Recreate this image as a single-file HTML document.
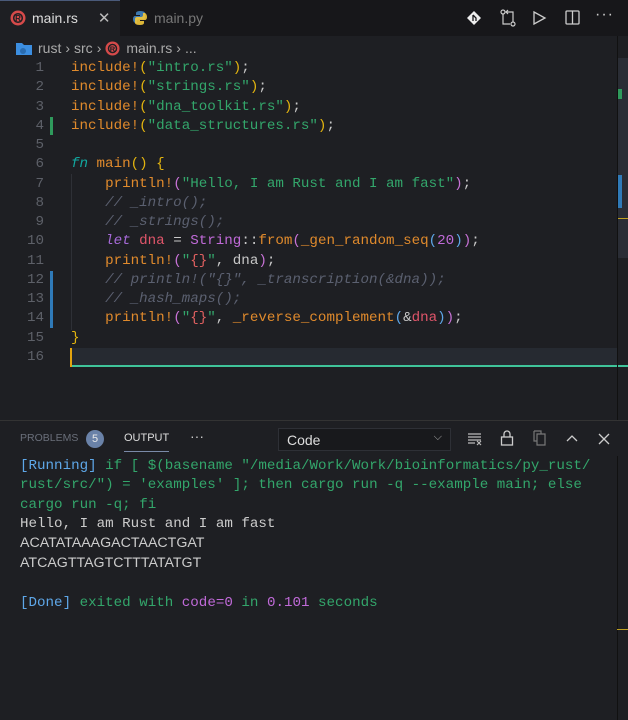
<!DOCTYPE html>
<html><head><meta charset="utf-8"><style>
*{margin:0;padding:0;box-sizing:border-box}
body{width:628px;height:720px;background:#1e1f23;overflow:hidden;position:relative;font-family:"Liberation Sans",sans-serif;color:#ccc}
.abs{position:absolute}
.mono{font-family:"Liberation Mono",monospace;font-size:14.2px;white-space:pre}
.tabbar{left:0;top:0;width:628px;height:36px;background:#17171a}
.tab{top:0;height:36px;display:flex;align-items:center;font-size:14px}
.ln{left:0;width:44px;text-align:right;color:#5d6068}
.code{left:71px}
.o{color:#e08a2c}.y{color:#e3b40f}.g{color:#33a66b}.p{color:#c772d6}.c{color:#5b6070;font-style:italic}
.k{color:#a66ad8;font-style:italic}.t{color:#12a8a0;font-style:italic}.r{color:#e0556a}.v{color:#c06ad8}
.b{color:#5ea7e8}.w{color:#c8c8c8}.rd{color:#e06060}
.out{left:20px;color:#ccc}
</style></head><body>
<div class="abs tabbar"></div>
<div class="abs" style="left:0;top:0;width:120px;height:36px;background:#1e1f23;border-top:1px solid #4a5a7a"></div>
<div class="abs tab" style="left:10px;color:#ddd">
<svg width="16" height="16" viewBox="0 0 16 16"><circle cx="8" cy="8" r="7.5" fill="#d64a4a"/><circle cx="8" cy="8" r="4.3" fill="none" stroke="#1e1f23" stroke-width="1.5"/><text x="8" y="11" font-size="8" text-anchor="middle" fill="#1e1f23" font-family="Liberation Sans" font-weight="bold">R</text></svg>
<span style="margin-left:6px">main.rs</span><span style="margin-left:20px;color:#bbb;font-size:15px">✕</span></div>
<div class="abs tab" style="left:132px;color:#777">
<svg width="16" height="16" viewBox="0 0 16 16"><path d="M8 1C4 1 4 3 4 3v2h4v1H3S1 6 1 9s2 4 2 4h2v-2s0-2 2-2h4s2 0 2-2V3S13 1 8 1z" fill="#3c78b0"/><path d="M8 15c4 0 4-2 4-2v-2H8v-1h5s2 0 2-3-2-4-2-4h-2v2s0 2-2 2H5S3 7 3 9v4s0 2 5 2z" fill="#f2c83c" opacity=".9"/></svg>
<span style="margin-left:6px">main.py</span></div>
<svg class="abs" style="left:466px;top:10px" width="16" height="16" viewBox="0 0 16 16"><path d="M8 1l7 7-7 7-7-7z" fill="#eee"/><path d="M7 5v6M7 5l3 3v3" stroke="#17171a" stroke-width="1.3" fill="none"/></svg>
<svg class="abs" style="left:500px;top:9px" width="16" height="18" viewBox="0 0 16 18" fill="none" stroke="#ccc" stroke-width="1.2"><circle cx="3" cy="3" r="2"/><circle cx="13" cy="15" r="2"/><path d="M3 5v10h7M13 13V3H6M8 1L6 3l2 2"/></svg>
<svg class="abs" style="left:531px;top:10px" width="16" height="16" viewBox="0 0 16 16"><path d="M3 2l11 6-11 6z" fill="none" stroke="#ccc" stroke-width="1.3"/></svg>
<svg class="abs" style="left:565px;top:10px" width="15" height="15" viewBox="0 0 15 15" fill="none" stroke="#ccc" stroke-width="1.3"><rect x="1" y="1" width="13" height="13" rx="1"/><path d="M7.5 1v13"/></svg>
<div class="abs" style="left:595px;top:6px;color:#ccc;font-size:16px;letter-spacing:1px">···</div>
<div class="abs" style="left:16px;top:38px;height:20px;display:flex;align-items:center;font-size:14px;color:#aaa">
<svg width="16" height="14" viewBox="0 0 16 14"><path d="M0 2h6l2 2h8v10H0z" fill="#3c8ee0"/><circle cx="7" cy="10" r="3" fill="#2a6cb0"/></svg>
<span style="margin-left:6px">rust</span><span style="margin:0 4px">›</span><span>src</span><span style="margin:0 4px">›</span>
<svg width="15" height="15" viewBox="0 0 16 16"><circle cx="8" cy="8" r="7.5" fill="#d64a4a"/><circle cx="8" cy="8" r="4.3" fill="none" stroke="#1e1f23" stroke-width="1.5"/><text x="8" y="11" font-size="8" text-anchor="middle" fill="#1e1f23" font-family="Liberation Sans" font-weight="bold">R</text></svg>
<span style="margin-left:6px">main.rs</span><span style="margin:0 4px">›</span><span>...</span></div>
<div class="abs" style="left:71px;top:348px;width:546px;height:19px;background:#262a31"></div>
<div class="abs" style="left:71px;top:365px;width:557px;height:2px;background:#3fc49a"></div>
<div class="abs" style="left:70px;top:348px;width:2px;height:19px;background:#e3a40f"></div>
<div class="abs" style="left:50px;top:117px;width:3px;height:18px;background:#2f9a5c"></div>
<div class="abs" style="left:50px;top:271px;width:3px;height:57px;background:#2f7ab8"></div>
<div class="abs" style="left:71px;top:174px;width:1px;height:156px;background:#2e3036"></div>
<div class="abs" style="left:617px;top:58px;width:11px;height:200px;background:#2a2d35"></div>
<div class="abs" style="left:617px;top:89px;width:5px;height:10px;background:#2f9a5c"></div>
<div class="abs" style="left:617px;top:175px;width:5px;height:33px;background:#2f7ab8"></div>
<div class="abs" style="left:617px;top:218px;width:11px;height:1px;background:#c0a020"></div>
<div class="abs" style="left:617px;top:36px;width:1px;height:384px;background:#111"></div>
<div class="abs mono ln" style="top:59px;line-height:19.27px">1
2
3
4
5
6
7
8
9
10
11
12
13
14
15
16</div>
<div class="abs mono code" style="top:59px;line-height:19.27px"><span class="o">include!</span><span class="y">(</span><span class="g">"intro.rs"</span><span class="y">)</span><span class="w">;</span>
<span class="o">include!</span><span class="y">(</span><span class="g">"strings.rs"</span><span class="y">)</span><span class="w">;</span>
<span class="o">include!</span><span class="y">(</span><span class="g">"dna_toolkit.rs"</span><span class="y">)</span><span class="w">;</span>
<span class="o">include!</span><span class="y">(</span><span class="g">"data_structures.rs"</span><span class="y">)</span><span class="w">;</span>

<span class="t">fn</span> <span class="o">main</span><span class="y">() {</span>
    <span class="o">println!</span><span class="p">(</span><span class="g">"Hello, I am Rust and I am fast"</span><span class="p">)</span><span class="w">;</span>
    <span class="c">// _intro();</span>
    <span class="c">// _strings();</span>
    <span class="k">let</span> <span class="r">dna</span> <span class="w">=</span> <span class="v">String</span><span class="w">::</span><span class="o">from</span><span class="p">(</span><span class="o">_gen_random_seq</span><span class="b">(</span><span class="v">20</span><span class="b">)</span><span class="p">)</span><span class="w">;</span>
    <span class="o">println!</span><span class="p">(</span><span class="g">"</span><span class="rd">{}</span><span class="g">"</span><span class="w">, dna</span><span class="p">)</span><span class="w">;</span>
    <span class="c">// println!("{}", _transcription(&amp;dna));</span>
    <span class="c">// _hash_maps();</span>
    <span class="o">println!</span><span class="p">(</span><span class="g">"</span><span class="rd">{}</span><span class="g">"</span><span class="w">, </span><span class="o">_reverse_complement</span><span class="b">(</span><span class="w">&amp;</span><span class="r">dna</span><span class="b">)</span><span class="p">)</span><span class="w">;</span>
<span class="y">}</span>
</div>
<div class="abs" style="left:0;top:420px;width:628px;height:1px;background:#333"></div>
<div class="abs" style="left:20px;top:432px;font-size:10.5px;color:#6a6f7a">PROBLEMS</div>
<div class="abs" style="left:86px;top:430px;width:18px;height:18px;border-radius:9px;background:#6a82a8;color:#e8e8e8;font-size:11px;text-align:center;line-height:18px">5</div>
<div class="abs" style="left:124px;top:432px;font-size:11px;color:#ddd">OUTPUT</div>
<div class="abs" style="left:124px;top:451px;width:45px;height:1px;background:#7a8aa8"></div>
<div class="abs" style="left:190px;top:428px;font-size:14px;color:#ccc">···</div>
<div class="abs" style="left:278px;top:428px;width:173px;height:23px;background:#18191c;border:1px solid #2e3036;font-size:14px;color:#ddd;padding:3px 0 0 8px">Code<span style="position:absolute;right:8px;top:2px;font-size:11px;color:#aaa">⌵</span></div>
<svg class="abs" style="left:467px;top:432px" width="16" height="14" viewBox="0 0 16 14" stroke="#bbb" stroke-width="1.2" fill="none"><path d="M1 2h13M1 5h13M1 8h13M1 11h7M10 9l4 4M14 9l-4 4"/></svg>
<svg class="abs" style="left:500px;top:430px" width="14" height="16" viewBox="0 0 14 16" stroke="#ccc" stroke-width="1.3" fill="none"><rect x="1.5" y="7" width="11" height="8"/><path d="M4 7V4a3 3 0 0 1 6 0v3"/></svg>
<svg class="abs" style="left:532px;top:430px" width="15" height="16" viewBox="0 0 15 16" stroke="#777" stroke-width="1.2" fill="none"><path d="M5 4h8v11H5zM2 1h7v3M2 1v10h3"/></svg>
<svg class="abs" style="left:565px;top:433px" width="14" height="10" viewBox="0 0 14 10" stroke="#ccc" stroke-width="1.3" fill="none"><path d="M2 8l5-5 5 5"/></svg>
<svg class="abs" style="left:598px;top:433px" width="12" height="12" viewBox="0 0 12 12" stroke="#ccc" stroke-width="1.3"><path d="M1 1l10 10M11 1L1 11"/></svg>
<div class="abs" style="left:617px;top:456px;width:1px;height:264px;background:#111"></div>
<div class="abs" style="left:617px;top:629px;width:11px;height:1px;background:#c0a020"></div>
<div class="abs mono out" style="top:457px;line-height:19.3px"><span class="b">[Running]</span><span class="g"> if [ $(basename "/media/Work/Work/bioinformatics/py_rust/
rust/src/") = 'examples' ]; then cargo run -q --example main; else
cargo run -q; fi</span>
Hello, I am Rust and I am fast
<span style="font-family:'Liberation Sans',sans-serif">ACATATAAAGACTAACTGAT
ATCAGTTAGTCTTTATATGT</span>

<span class="b">[Done]</span><span class="g"> exited with </span><span class="v">code=0</span><span class="g"> in </span><span class="v">0.101</span><span class="g"> seconds</span></div>
</body></html>
